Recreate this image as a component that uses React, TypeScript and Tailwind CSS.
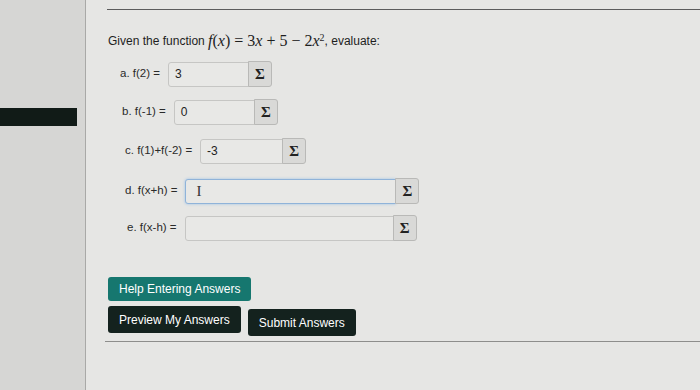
import type { ReactNode } from "react";

interface RowProps {
  label: string;
  value?: string;
  width: number;
  focused?: boolean;
  cls: string;
}

function Sigma() {
  return <span className="font-['Liberation_Serif',serif] text-[15px] font-bold text-[#222]">Σ</span>;
}

function AnswerRow({ label, value, width, focused, cls }: RowProps) {
  return (
    <div className={`flex items-center ${cls}`}>
      <span className="text-[11.5px] text-[#2a2a2a] mr-[8px] whitespace-nowrap">{label}</span>
      <div
        className={`h-[25px] flex items-center pl-[6px] text-[12px] text-[#222] rounded-l-[3px] bg-[#e8e8e6] border ${
          focused ? "border-[#8fb3d9] shadow-[0_0_3px_#9cc0e6]" : "border-[#c6c6c4]"
        }`}
        style={{ width }}
      >
        {focused ? <span className="font-['Liberation_Serif',serif] text-[15px] text-[#333] ml-[4px]">I</span> : value}
      </div>
      <div className="h-[26px] w-[24px] flex items-center justify-center bg-[#d9d9d7] border border-[#b9b9b7] rounded-r-[3px] -ml-px">
        <Sigma />
      </div>
    </div>
  );
}

function Btn({ children, cls }: { children: ReactNode; cls: string }) {
  return (
    <button className={`rounded-[3px] text-white text-[12px] px-[11px] whitespace-nowrap ${cls}`}>{children}</button>
  );
}

export default function App() {
  return (
    <div className="w-[700px] h-[390px] flex overflow-hidden bg-[#e6e6e4] font-['Liberation_Sans',Arial,sans-serif]">
      <div className="w-[86px] shrink-0 bg-[#d6d6d4] border-r border-[#a9a9a7]">
        <div className="mt-[108px] h-[18px] w-[77px] bg-[#111b17]" />
      </div>
      <div className="flex-1 flex flex-col">
        <div className="mt-[9px] ml-[21px] border-t-[1.5px] border-[#5c5c5c]" />
        <div className="mt-[21px] ml-[22px] h-[20px] flex items-center text-[12px] text-[#1e1e1e] whitespace-nowrap">
          <span>Given the function&nbsp;</span>
          <span className="font-['Liberation_Serif',serif] text-[16px]">
            <i>f</i>(<i>x</i>) = 3<i>x</i> + 5 − 2<i>x</i>
            <sup className="text-[10px]">2</sup>
          </span>
          <span>, evaluate:</span>
        </div>
        <AnswerRow label="a. f(2) =" value="3" width={81} cls="mt-[10px] ml-[34px]" />
        <AnswerRow label="b. f(-1) =" value="0" width={81} cls="mt-[12px] ml-[36px]" />
        <AnswerRow label="c. f(1)+f(-2) =" value="-3" width={83} cls="mt-[13px] ml-[39px]" />
        <AnswerRow label="d. f(x+h) =" width={211} focused cls="mt-[14px] ml-[39px]" />
        <AnswerRow label="e. f(x-h) =" width={209} cls="mt-[11px] ml-[41px]" />
        <div className="mt-[36px] ml-[22px] flex">
          <Btn cls="h-[24px] bg-[#16776f]">Help Entering Answers</Btn>
        </div>
        <div className="mt-[5px] ml-[22px] flex items-start gap-[7px]">
          <Btn cls="h-[27px] bg-[#14221e]">Preview My Answers</Btn>
          <Btn cls="h-[27px] mt-[3px] bg-[#14221e]">Submit Answers</Btn>
        </div>
        <div className="mt-[5px] ml-[19px] border-t-[1.5px] border-[#8e8e8c]" />
      </div>
    </div>
  );
}
